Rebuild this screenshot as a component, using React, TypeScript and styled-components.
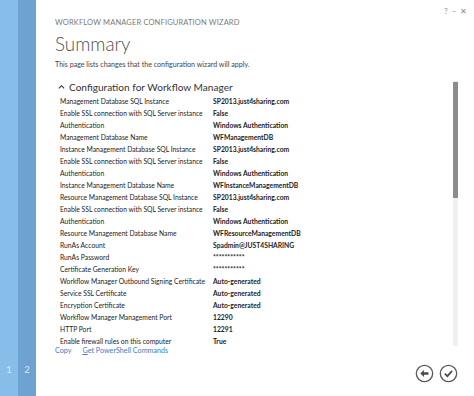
import styled, { createGlobalStyle } from 'styled-components';

const Global = createGlobalStyle`
	html, body {
		margin: 0;
		padding: 0;
		background: #ffffff;
		overflow: hidden;
	}
`;

const rows: [string, string][] = [
	['Management Database SQL Instance', 'SP2013.just4sharing.com'],
	['Enable SSL connection with SQL Server instance', 'False'],
	['Authentication', 'Windows Authentication'],
	['Management Database Name', 'WFManagementDB'],
	['Instance Management Database SQL Instance', 'SP2013.just4sharing.com'],
	['Enable SSL connection with SQL Server instance', 'False'],
	['Authentication', 'Windows Authentication'],
	['Instance Management Database Name', 'WFInstanceManagementDB'],
	['Resource Management Database SQL Instance', 'SP2013.just4sharing.com'],
	['Enable SSL connection with SQL Server instance', 'False'],
	['Authentication', 'Windows Authentication'],
	['Resource Management Database Name', 'WFResourceManagementDB'],
	['RunAs Account', 'Spadmin@JUST4SHARING'],
	['RunAs Password', '***********'],
	['Certificate Generation Key', '***********'],
	['Workflow Manager Outbound Signing Certificate', 'Auto-generated'],
	['Service SSL Certificate', 'Auto-generated'],
	['Encryption Certificate', 'Auto-generated'],
	['Workflow Manager Management Port', '12290'],
	['HTTP Port', '12291'],
	['Enable firewall rules on this computer', 'True'],
];

export default function App() {
	return (
		<>
			<Global />
			<Window>
				<Step $bg='#86bde9'>
					<StepNumber>1</StepNumber>
				</Step>
				<Step $bg='#6da2d1'>
					<StepNumber>2</StepNumber>
				</Step>
				<Main>
					<TitleBar>
						<Caption>WORKFLOW MANAGER CONFIGURATION WIZARD</Caption>
						<Controls>
							<span>?</span>
							<span>–</span>
							<span>✕</span>
						</Controls>
					</TitleBar>
					<Heading>Summary</Heading>
					<Description>This page lists changes that the configuration wizard will apply.</Description>
					<ScrollArea>
						<List>
							<Section>
								<Chevron viewBox='0 0 8 6'>
									<path d='M1 4.5 L4 1.5 L7 4.5' fill='none' stroke='#333' strokeWidth='1.3' />
								</Chevron>
								Configuration for Workflow Manager
							</Section>
							{rows.map(([label, value], i) => (
								<Row key={i}>
									<Label>{label}</Label>
									<Value>{value}</Value>
								</Row>
							))}
						</List>
						<Track>
							<Thumb />
						</Track>
					</ScrollArea>
					<Links>
						<Link>Copy</Link>
						<Link>
							<u>G</u>et PowerShell Commands
						</Link>
					</Links>
					<Footer>
						<RoundButton viewBox='0 0 20 20'>
							<circle cx='10' cy='10' r='8.6' fill='none' stroke='#5a5a5a' strokeWidth='1.4' />
							<path d='M5.6 10 L9.4 6.4 L9.4 8.6 L14.2 8.6 L14.2 11.4 L9.4 11.4 L9.4 13.6 Z' fill='#4a4a4a' />
						</RoundButton>
						<RoundButton viewBox='0 0 20 20'>
							<circle cx='10' cy='10' r='8.6' fill='none' stroke='#5a5a5a' strokeWidth='1.4' />
							<path d='M6.2 10.2 L8.8 12.8 L13.8 7.2' fill='none' stroke='#4a4a4a' strokeWidth='1.8' />
						</RoundButton>
					</Footer>
				</Main>
			</Window>
		</>
	);
}

const font = `Lato, 'Open Sans', sans-serif`;

const Window = styled.div`
	display: flex;
	width: 474px;
	height: 396px;
	font-family: ${font};
	background: #ffffff;
`;

const Step = styled.div<{ $bg: string }>`
	width: 18px;
	flex: none;
	display: flex;
	align-items: flex-end;
	justify-content: center;
	background: ${(p) => p.$bg};
	padding-bottom: 21px;
	box-sizing: border-box;
`;

const StepNumber = styled.span`
	font-size: 9.5px;
	line-height: 10px;
	color: #d9eaf8;
`;

const Main = styled.div`
	flex: 1;
	display: flex;
	flex-direction: column;
	padding: 0 16px 0 19px;
`;

const TitleBar = styled.div`
	display: flex;
	justify-content: space-between;
	height: 28px;
`;

const Caption = styled.div`
	padding-top: 18px;
	font-size: 7.5px;
	line-height: 10px;
	color: #7a7a7a;
	letter-spacing: 0.15px;
`;

const Controls = styled.div`
	display: flex;
	gap: 4px;
	padding-top: 7px;
	margin-right: -9px;
	font-size: 7.5px;
	line-height: 10px;
	color: #8a8a8a;
`;

const Heading = styled.h1`
	margin: 2px 0 0;
	font-size: 18.8px;
	line-height: 26px;
	font-weight: 300;
	color: #505050;
	padding-top: 1px;
	height: 25px;
`;

const Description = styled.p`
	margin: 4px 0 0;
	font-size: 7.1px;
	line-height: 10px;
	color: #444444;
`;

const ScrollArea = styled.div`
	margin-top: 11px;
	height: 265px;
	display: flex;
	overflow: hidden;
`;

const List = styled.div`
	flex: 1;
	display: flex;
	flex-direction: column;
`;

const Section = styled.div`
	display: flex;
	align-items: center;
	gap: 4px;
	height: 14px;
	margin-bottom: 2px;
	padding-left: 3px;
	font-size: 10.1px;
	color: #333333;
`;

const Chevron = styled.svg`
	width: 7px;
	height: 6px;
`;

const Row = styled.div`
	display: flex;
	flex: none;
	height: 12px;
	align-items: center;
	padding-left: 5px;
	font-size: 6.75px;
	color: #222222;
	white-space: nowrap;
`;

const Label = styled.span`
	width: 153px;
	flex: none;
`;

const Value = styled.span`
	font-weight: 700;
`;

const Track = styled.div`
	width: 5px;
	margin-left: 4px;
	background: #f0f0f0;
`;

const Thumb = styled.div`
	height: 116px;
	margin-top: 1px;
	background: #8c8c8c;
`;

const Links = styled.div`
	display: flex;
	gap: 11px;
	font-size: 7.2px;
	line-height: 10px;
`;

const Link = styled.span`
	color: #3d7ec4;
	u {
		text-decoration-thickness: 0.5px;
	}
`;

const Footer = styled.div`
	display: flex;
	justify-content: flex-end;
	gap: 5px;
	margin-top: 8px;
`;

const RoundButton = styled.svg`
	width: 19px;
	height: 19px;
`;
